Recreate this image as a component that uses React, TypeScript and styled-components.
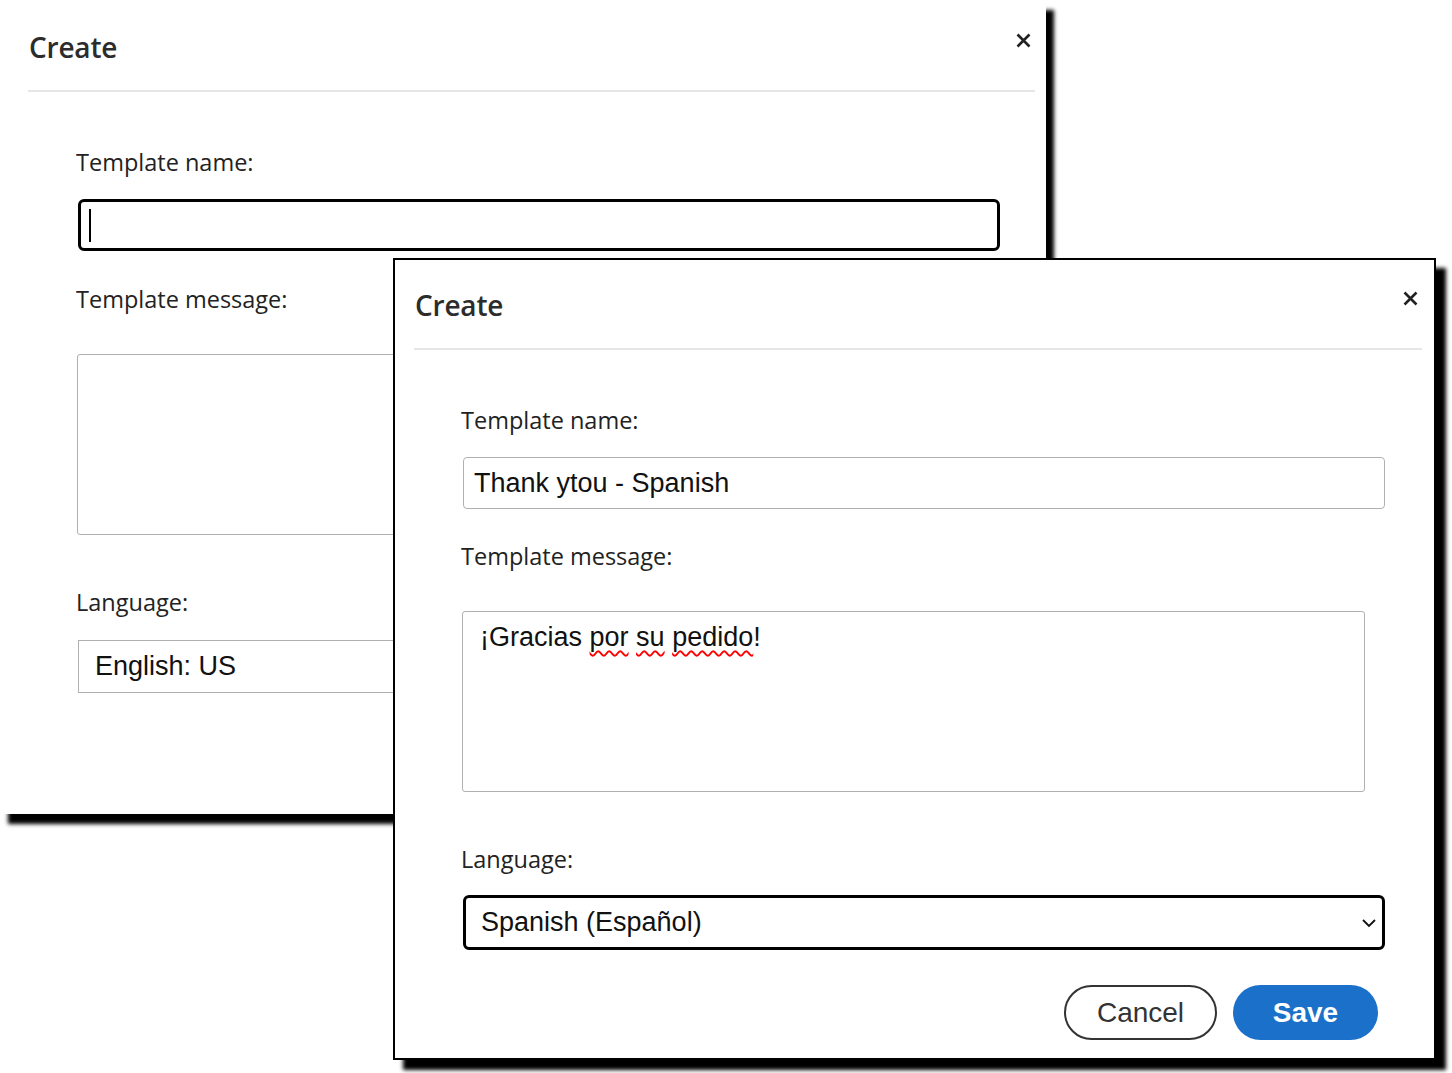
import React from "react";
import styled, { createGlobalStyle, css } from "styled-components";

const Global = createGlobalStyle`
  html, body { margin: 0; padding: 0; background: #fff; }
  body { font-family: "Open Sans", "Liberation Sans", sans-serif; }
  * { box-sizing: border-box; }
`;

const Canvas = styled.div`
  position: relative;
  width: 1452px;
  height: 1073px;
  overflow: hidden;
  background: #ffffff;
`;

const DialogBox = styled.div<{
  $left: number;
  $top: number;
  $width: number;
  $height: number;
  $front?: boolean;
}>`
  position: absolute;
  left: ${(p) => p.$left}px;
  top: ${(p) => p.$top}px;
  width: ${(p) => p.$width}px;
  height: ${(p) => p.$height}px;
  background: #fff;
  display: flex;
  flex-direction: column;
  border: 2px solid ${(p) => (p.$front ? "#000" : "transparent")};
  box-shadow: ${(p) => (p.$front ? "10px 10px 4px #000" : "8px 10px 4px #000")};
`;

const Header = styled.div<{ $shiftL: number; $shiftR: number }>`
  display: flex;
  justify-content: space-between;
  align-items: flex-start;
  padding: 28px ${(p) => 16 - p.$shiftR}px 26px ${(p) => 20 + p.$shiftL}px;
`;

const Title = styled.h2`
  margin: 0;
  font-family: "Open Sans", "Noto Sans", sans-serif;
  font-weight: 600;
  font-size: 28px;
  line-height: 34px;
  color: #2c2c2c;
  letter-spacing: -0.2px;
`;

const CloseButton = styled.button`
  margin-top: 3px;
  width: 15px;
  height: 15px;
  padding: 0;
  border: none;
  background: transparent;
  display: flex;
  cursor: pointer;
`;

const Separator = styled.div<{ $shiftL: number; $shiftR: number }>`
  height: 2px;
  margin: 0 ${(p) => 12 - p.$shiftR}px 0 ${(p) => 19 + p.$shiftL}px;
  background: #e6e6e6;
`;

const Body = styled.div<{ $shiftL?: number }>`
  display: flex;
  flex-direction: column;
  align-items: flex-start;
  padding-left: ${(p) => 66 + (p.$shiftL ?? 0)}px;
`;

const Label = styled.div<{ $mt: number }>`
  margin-top: ${(p) => p.$mt}px;
  font-family: "Open Sans", "Noto Sans", sans-serif;
  font-size: 23.5px;
  line-height: 30px;
  color: #222;
`;

const fieldText = css`
  font-family: "Liberation Sans", Arial, sans-serif;
  font-size: 27px;
  color: #111;
`;

const InputBox = styled.div<{ $focused?: boolean }>`
  ${fieldText};
  margin-top: 22px;
  margin-left: 2px;
  width: 922px;
  height: 52px;
  display: flex;
  align-items: center;
  padding-left: ${(p) => (p.$focused ? 8 : 10)}px;
  border: ${(p) => (p.$focused ? "3px solid #000" : "1px solid #b0b0b0")};
  border-radius: ${(p) => (p.$focused ? 6 : 4)}px;
`;

const Caret = styled.span`
  display: block;
  width: 2px;
  height: 33px;
  background: #000;
`;

const TextAreaBox = styled.div`
  ${fieldText};
  margin-top: 40px;
  margin-left: 1px;
  width: 903px;
  height: 181px;
  padding: 9px 0 0 17px;
  line-height: 32px;
  border: 1px solid #b0b0b0;
  border-radius: 3px;
`;

const Misspelled = styled.span`
  text-decoration: underline wavy #ff0000;
  text-decoration-thickness: 1.6px;
  text-underline-offset: 4px;
  text-decoration-skip-ink: none;
`;

const SelectBox = styled.div<{ $focused?: boolean }>`
  ${fieldText};
  margin-top: ${(p) => (p.$focused ? 21 : 23)}px;
  margin-left: 2px;
  width: 922px;
  height: ${(p) => (p.$focused ? 55 : 53)}px;
  display: flex;
  align-items: center;
  justify-content: space-between;
  padding: 0 6px 0 ${(p) => (p.$focused ? 15 : 16)}px;
  border: ${(p) => (p.$focused ? "3px solid #000" : "1px solid #b0b0b0")};
  border-radius: ${(p) => (p.$focused ? 6 : 0)}px;
`;

const Buttons = styled.div`
  margin-top: 35px;
  display: flex;
  justify-content: flex-end;
  gap: 16px;
  padding-right: 56px;
`;

const PillButton = styled.button<{ $primary?: boolean }>`
  height: 55px;
  width: ${(p) => (p.$primary ? 145 : 153)}px;
  border-radius: 28px;
  font-family: "Liberation Sans", Arial, sans-serif;
  font-size: 28px;
  font-weight: ${(p) => (p.$primary ? 700 : 400)};
  padding: 0;
  cursor: pointer;
  ${(p) =>
    p.$primary
      ? css`
          background: #1b70c9;
          color: #fff;
          border: none;
        `
      : css`
          background: #fff;
          color: #333;
          border: 2px solid #333;
        `}
`;

const CloseIcon = () => (
  <svg width="15" height="15" viewBox="0 0 15 15">
    <path d="M1.5 1.5 L13.5 13.5 M13.5 1.5 L1.5 13.5" stroke="#222" strokeWidth="2.6" strokeLinecap="butt" />
  </svg>
);

const Chevron = () => (
  <svg width="14" height="10" viewBox="0 0 14 10">
    <path d="M1 2 L7 8 L13 2" fill="none" stroke="#111" strokeWidth="1.8" />
  </svg>
);

type DialogProps = {
  left: number;
  top: number;
  width: number;
  height: number;
  front?: boolean;
  shiftL?: number;
  shiftR?: number;
  children: React.ReactNode;
};

const Dialog = ({ left, top, width, height, front, shiftL = 0, shiftR = 0, children }: DialogProps) => (
  <DialogBox $left={left} $top={top} $width={width} $height={height} $front={front}>
    <Header $shiftL={shiftL} $shiftR={shiftR}>
      <Title>Create</Title>
      <CloseButton aria-label="Close">
        <CloseIcon />
      </CloseButton>
    </Header>
    <Separator $shiftL={shiftL} $shiftR={shiftR} />
    {children}
  </DialogBox>
);

export default function App() {
  return (
    <Canvas>
      <Global />
      <Dialog left={0} top={0} width={1046} height={814} shiftL={7} shiftR={3}>
        <Body $shiftL={8}>
          <Label $mt={55}>Template name:</Label>
          <InputBox $focused>
            <Caret />
          </InputBox>
          <Label $mt={33}>Template message:</Label>
          <TextAreaBox />
          <Label $mt={52}>Language:</Label>
          <SelectBox>
            <span>English: US</span>
          </SelectBox>
        </Body>
      </Dialog>
      <Dialog left={393} top={258} width={1043} height={802} front>
        <Body>
          <Label $mt={55}>Template name:</Label>
          <InputBox>Thank ytou - Spanish</InputBox>
          <Label $mt={32}>Template message:</Label>
          <TextAreaBox>
            ¡Gracias <Misspelled>por</Misspelled> <Misspelled>su</Misspelled>{" "}
            <Misspelled>pedido</Misspelled>!
          </TextAreaBox>
          <Label $mt={52}>Language:</Label>
          <SelectBox $focused>
            <span>Spanish (Español)</span>
            <Chevron />
          </SelectBox>
        </Body>
        <Buttons>
          <PillButton>Cancel</PillButton>
          <PillButton $primary>Save</PillButton>
        </Buttons>
      </Dialog>
    </Canvas>
  );
}
